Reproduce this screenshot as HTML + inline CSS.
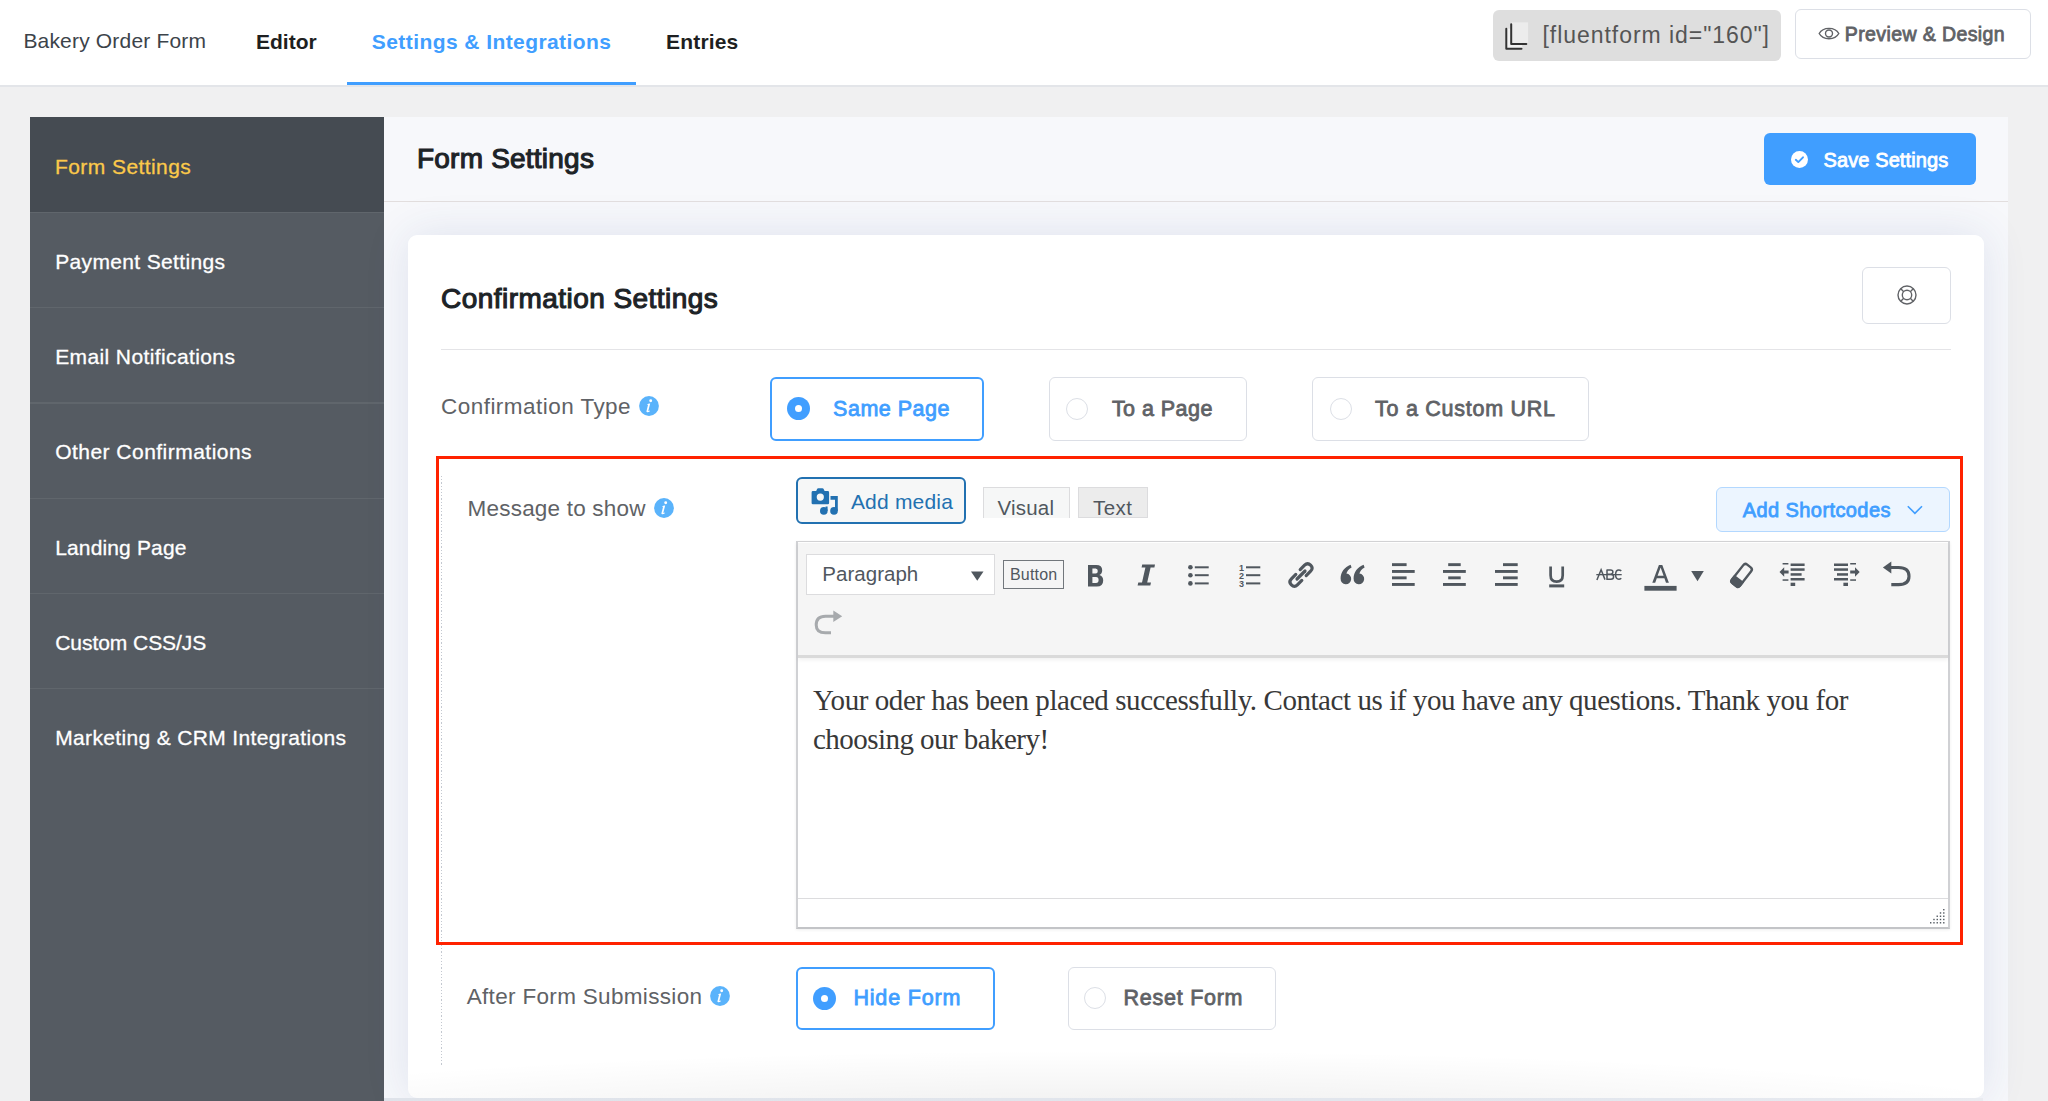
<!DOCTYPE html>
<html><head><meta charset="utf-8"><title>Fluent Forms Settings</title>
<style>
html,body{margin:0;padding:0}
body{width:2048px;height:1101px;overflow:hidden;position:relative;background:#f0f0f1;font-family:"Liberation Sans",sans-serif}
.t{position:absolute;white-space:nowrap}
.box{position:absolute}
.ic{position:absolute;overflow:visible}
#hdr{position:absolute;left:0;top:0;width:2048px;height:85px;background:#fff;border-bottom:2px solid #e3e5e9}
</style></head><body>
<div id="hdr"></div>
<div class="t" style="left:23.40px;top:30.42px;font-size:21px;line-height:21px;font-weight:normal;color:#3c434a;letter-spacing:0.181px;font-family:'Liberation Sans', sans-serif;">Bakery Order Form</div>
<div class="t" style="left:255.90px;top:30.62px;font-size:21px;line-height:21px;font-weight:bold;color:#1e1f21;letter-spacing:0.040px;font-family:'Liberation Sans', sans-serif;">Editor</div>
<div class="t" style="left:371.80px;top:30.62px;font-size:21px;line-height:21px;font-weight:bold;color:#409eff;letter-spacing:0.423px;font-family:'Liberation Sans', sans-serif;">Settings &amp; Integrations</div>
<div class="t" style="left:666.00px;top:30.62px;font-size:21px;line-height:21px;font-weight:bold;color:#1e1f21;letter-spacing:0.183px;font-family:'Liberation Sans', sans-serif;">Entries</div>
<div style="position:absolute;left:347px;top:81.6px;width:288.6px;height:3.4px;background:#409eff"></div>
<div class="box" style="left:1493px;top:10px;width:288px;height:50.6px;background:#dedede;border-radius:6px"></div>
<svg class="ic" style="left:1503px;top:21px" width="28" height="32" viewBox="0 0 28 32">
<rect x="3.6" y="7.6" width="15.5" height="20" fill="#f2f2f2"/>
<rect x="8.6" y="1.3" width="16.5" height="20.6" fill="#ececec"/>
<path d="M8.2 3.3 V23 H23.3" fill="none" stroke="#333" stroke-width="2" stroke-linecap="round" stroke-linejoin="round"/>
<path d="M3.3 7.8 V27.7 H18.5" fill="none" stroke="#333" stroke-width="2" stroke-linecap="round" stroke-linejoin="round"/>
</svg>
<div class="t" style="left:1542.50px;top:23.53px;font-size:23px;line-height:23px;font-weight:normal;color:#555555;letter-spacing:0.950px;font-family:'Liberation Sans', sans-serif;">[fluentform id="160"]</div>
<div class="box" style="left:1794.5px;top:8.5px;width:236.8px;height:50px;border:1.5px solid #dcdfe6;border-radius:6px;box-sizing:border-box;background:#fff"></div>
<svg class="ic" style="left:1818px;top:25px" width="22" height="17" viewBox="0 0 22 17">
<path d="M1.2 8.5 C5 1.6 17 1.6 20.8 8.5 C17 15.4 5 15.4 1.2 8.5Z" fill="none" stroke="#606266" stroke-width="1.4"/>
<circle cx="11" cy="8.5" r="3.5" fill="none" stroke="#606266" stroke-width="1.4"/>
</svg>
<div class="t" style="left:1844.80px;top:24.69px;font-size:19.5px;line-height:19.5px;font-weight:normal;color:#606266;letter-spacing:0.393px;font-family:'Liberation Sans', sans-serif;-webkit-text-stroke:0.8px #606266;">Preview &amp; Design</div>
<div class="box" style="left:30px;top:117px;width:354px;height:984px;background:#555b62"></div>
<div class="box" style="left:30px;top:117px;width:354px;height:95px;background:#454b52"></div>
<div class="box" style="left:30px;top:212.05px;width:354px;height:1.3px;background:#60666c"></div>
<div class="box" style="left:30px;top:307.20px;width:354px;height:1.3px;background:#60666c"></div>
<div class="box" style="left:30px;top:402.35px;width:354px;height:1.3px;background:#60666c"></div>
<div class="box" style="left:30px;top:497.50px;width:354px;height:1.3px;background:#60666c"></div>
<div class="box" style="left:30px;top:592.65px;width:354px;height:1.3px;background:#60666c"></div>
<div class="box" style="left:30px;top:687.80px;width:354px;height:1.3px;background:#60666c"></div>
<div class="t" style="left:55.00px;top:156.22px;font-size:21px;line-height:21px;font-weight:normal;color:#fbc94a;letter-spacing:0.425px;font-family:'Liberation Sans', sans-serif;-webkit-text-stroke:0.3px #fbc94a;">Form Settings</div>
<div class="t" style="left:55.20px;top:251.07px;font-size:21px;line-height:21px;font-weight:normal;color:#ffffff;letter-spacing:0.347px;font-family:'Liberation Sans', sans-serif;-webkit-text-stroke:0.3px #fff;">Payment Settings</div>
<div class="t" style="left:55.20px;top:346.22px;font-size:21px;line-height:21px;font-weight:normal;color:#ffffff;letter-spacing:0.389px;font-family:'Liberation Sans', sans-serif;-webkit-text-stroke:0.3px #fff;">Email Notifications</div>
<div class="t" style="left:55.20px;top:441.37px;font-size:21px;line-height:21px;font-weight:normal;color:#ffffff;letter-spacing:0.472px;font-family:'Liberation Sans', sans-serif;-webkit-text-stroke:0.3px #fff;">Other Confirmations</div>
<div class="t" style="left:55.20px;top:536.52px;font-size:21px;line-height:21px;font-weight:normal;color:#ffffff;letter-spacing:0.145px;font-family:'Liberation Sans', sans-serif;-webkit-text-stroke:0.3px #fff;">Landing Page</div>
<div class="t" style="left:55.20px;top:631.67px;font-size:21px;line-height:21px;font-weight:normal;color:#ffffff;letter-spacing:-0.050px;font-family:'Liberation Sans', sans-serif;-webkit-text-stroke:0.3px #fff;">Custom CSS/JS</div>
<div class="t" style="left:55.20px;top:726.82px;font-size:21px;line-height:21px;font-weight:normal;color:#ffffff;letter-spacing:0.352px;font-family:'Liberation Sans', sans-serif;-webkit-text-stroke:0.3px #fff;">Marketing &amp; CRM Integrations</div>
<div class="box" style="left:384px;top:117px;width:1624px;height:984px;background:#f7f8fb"></div>
<div class="box" style="left:384px;top:201px;width:1624px;height:1.2px;background:#e2dede"></div>
<div class="t" style="left:417.00px;top:144.70px;font-size:28px;line-height:28px;font-weight:normal;color:#1d2327;letter-spacing:0.217px;font-family:'Liberation Sans', sans-serif;-webkit-text-stroke:0.8px #1d2327;-webkit-text-stroke-width:1.1px;">Form Settings</div>
<div class="box" style="left:1764px;top:133px;width:211.6px;height:51.7px;background:#409eff;border-radius:6px"></div>
<svg class="ic" style="left:1791px;top:150.5px" width="17" height="17" viewBox="0 0 17 17">
<circle cx="8.5" cy="8.5" r="8.5" fill="#fff"/>
<path d="M4.8 8.8 L7.3 11.1 L12 6.3" fill="none" stroke="#409eff" stroke-width="1.9" stroke-linecap="round" stroke-linejoin="round"/>
</svg>
<div class="t" style="left:1823.50px;top:149.97px;font-size:20px;line-height:20px;font-weight:normal;color:#ffffff;letter-spacing:0.108px;font-family:'Liberation Sans', sans-serif;-webkit-text-stroke:0.8px #ffffff;">Save Settings</div>
<div class="box" id="card" style="left:408px;top:235px;width:1575.6px;height:862.5px;background:#fff;border-radius:9px;box-shadow:0 0 45px rgba(45,65,140,0.12)"></div>
<div class="box" style="left:408px;top:1030px;width:1575.6px;height:67.5px;border-radius:0 0 9px 9px;background:radial-gradient(ellipse 1000px 75px at 700px 95px, rgba(0,0,0,0.075), rgba(0,0,0,0) 100%)"></div>
<div class="box" style="left:384px;top:1097.8px;width:1599px;height:4px;background:linear-gradient(to right,#dfe3ea,#e3e7ee 80%,#e9ebf0)"></div>
<div class="t" style="left:441.00px;top:284.60px;font-size:28px;line-height:28px;font-weight:normal;color:#1d2327;letter-spacing:0.455px;font-family:'Liberation Sans', sans-serif;-webkit-text-stroke:0.8px #1d2327;-webkit-text-stroke-width:1.1px;">Confirmation Settings</div>
<div class="box" style="left:1862px;top:267.2px;width:89px;height:57.2px;border:1.5px solid #dcdfe6;border-radius:6px;box-sizing:border-box"></div>
<svg class="ic" style="left:1895.5px;top:284px" width="22" height="22" viewBox="0 0 22 22">
<circle cx="11" cy="11" r="9" fill="none" stroke="#606266" stroke-width="1.4"/>
<circle cx="11" cy="11" r="4.7" fill="none" stroke="#606266" stroke-width="1.4"/>
<path d="M4.8 4.8 L7.7 7.7 M17.2 4.8 L14.3 7.7 M4.8 17.2 L7.7 14.3 M17.2 17.2 L14.3 14.3" stroke="#606266" stroke-width="1.4"/>
</svg>
<div class="box" style="left:441px;top:349px;width:1510px;height:1.3px;background:#e4e4e7"></div>
<div class="t" style="left:441.00px;top:395.75px;font-size:22.5px;line-height:22.5px;font-weight:normal;color:#606266;letter-spacing:0.463px;font-family:'Liberation Sans', sans-serif;">Confirmation Type</div>
<svg class="ic" style="left:638.7px;top:396.4px" width="20" height="20" viewBox="0 0 20 20"><circle cx="10" cy="10" r="9.9" fill="#5ab3fb"/><circle cx="11.7" cy="4.8" r="1.45" fill="#fff"/><path d="M8.2 8.3 Q9.6 7.4 11.2 7.6 L9.4 14.4 Q9.2 15.3 10.6 14.6 L10.9 15.2 Q9.4 16.5 8.1 16.3 Q7.2 16.1 7.5 15 L9 9.1 Q8.8 8.7 8.4 8.8Z" fill="#fff"/></svg>
<div class="box" style="left:770.3px;top:377.2px;width:213.8px;height:63.5px;border:2px solid #409eff;border-radius:6px;box-sizing:border-box;background:#fff"></div><div class="box" style="left:787.1px;top:397.4px;width:23px;height:23px;border-radius:50%;background:#409eff"></div><div class="box" style="left:795.0px;top:405.3px;width:7.2px;height:7.2px;border-radius:50%;background:#fff"></div><div class="t" style="left:833.10px;top:398.80px;font-size:21.5px;line-height:21.5px;font-weight:normal;color:#409eff;letter-spacing:0.500px;font-family:'Liberation Sans', sans-serif;-webkit-text-stroke:0.8px #409eff;">Same Page</div>
<div class="box" style="left:1049.3px;top:377.2px;width:197.7px;height:63.5px;border:1.6px solid #dcdfe6;border-radius:6px;box-sizing:border-box;background:#fff"></div><div class="box" style="left:1066.4px;top:397.9px;width:22px;height:22px;border-radius:50%;border:1.7px solid #dcdfe6;box-sizing:border-box;background:#fff"></div><div class="t" style="left:1111.90px;top:398.80px;font-size:21.5px;line-height:21.5px;font-weight:normal;color:#606266;letter-spacing:0.463px;font-family:'Liberation Sans', sans-serif;-webkit-text-stroke:0.8px #606266;">To a Page</div>
<div class="box" style="left:1312.2px;top:377.2px;width:277.2px;height:63.5px;border:1.6px solid #dcdfe6;border-radius:6px;box-sizing:border-box;background:#fff"></div><div class="box" style="left:1329.6px;top:397.9px;width:22px;height:22px;border-radius:50%;border:1.7px solid #dcdfe6;box-sizing:border-box;background:#fff"></div><div class="t" style="left:1375.00px;top:398.80px;font-size:21.5px;line-height:21.5px;font-weight:normal;color:#606266;letter-spacing:0.736px;font-family:'Liberation Sans', sans-serif;-webkit-text-stroke:0.8px #606266;">To a Custom URL</div>
<div class="box" style="left:436.3px;top:456.3px;width:1526.7px;height:488.7px;border:3.7px solid #ff2200;box-sizing:border-box"></div>
<div class="box" style="left:441px;top:476px;width:1.2px;height:466px;background:repeating-linear-gradient(to bottom,#c3c8d0 0,#c3c8d0 1.3px,transparent 1.3px,transparent 3.2px)"></div>
<div class="box" style="left:441px;top:945px;width:1.2px;height:121px;background:repeating-linear-gradient(to bottom,#c3c8d0 0,#c3c8d0 1.3px,transparent 1.3px,transparent 3.2px)"></div>
<div class="t" style="left:467.60px;top:498.15px;font-size:22.5px;line-height:22.5px;font-weight:normal;color:#606266;letter-spacing:0.200px;font-family:'Liberation Sans', sans-serif;">Message to show</div>
<svg class="ic" style="left:654.0px;top:498.0px" width="20" height="20" viewBox="0 0 20 20"><circle cx="10" cy="10" r="9.9" fill="#5ab3fb"/><circle cx="11.7" cy="4.8" r="1.45" fill="#fff"/><path d="M8.2 8.3 Q9.6 7.4 11.2 7.6 L9.4 14.4 Q9.2 15.3 10.6 14.6 L10.9 15.2 Q9.4 16.5 8.1 16.3 Q7.2 16.1 7.5 15 L9 9.1 Q8.8 8.7 8.4 8.8Z" fill="#fff"/></svg>
<div class="box" style="left:796px;top:477px;width:169.5px;height:47.4px;border:2px solid #2271b1;border-radius:6px;box-sizing:border-box;background:#f6f7f7"></div>
<svg class="ic" style="left:800px;top:480px" width="40" height="40" viewBox="0 0 40 40">
<path d="M11.6 12.4 Q11.6 11.1 12.9 11.1 H16.2 L17.2 8.8 Q17.5 8.2 18.3 8.2 H22.4 Q23.2 8.2 23.5 8.8 L24.6 11.1 H27.8 Q29.1 11.1 29.1 12.4 V22.9 Q29.1 24.2 27.8 24.2 H12.9 Q11.6 24.2 11.6 22.9 Z" fill="#2271b1"/>
<circle cx="20.3" cy="17.1" r="3.6" fill="#f6f7f7"/>
<circle cx="23.8" cy="30.9" r="3.8" fill="#2271b1"/>
<path d="M25.6 26.5 H27.6 V31 H25.6Z" fill="#2271b1"/>
<path d="M30.5 16 H37.8 V31 H35 V19.8 H30.5Z" fill="#2271b1"/>
<circle cx="34" cy="30.9" r="3.8" fill="#2271b1"/>
</svg>
<div class="t" style="left:850.90px;top:491.22px;font-size:21px;line-height:21px;font-weight:normal;color:#2271b1;letter-spacing:0.200px;font-family:'Liberation Sans', sans-serif;">Add media</div>
<div class="box" style="left:982.5px;top:486.5px;width:87px;height:31.5px;border:1.5px solid #dcdcde;border-bottom:none;box-sizing:border-box;background:#f6f7f7"></div>
<div class="t" style="left:997.40px;top:497.65px;font-size:20.5px;line-height:20.5px;font-weight:normal;color:#50575e;letter-spacing:0.220px;font-family:'Liberation Sans', sans-serif;">Visual</div>
<div class="box" style="left:1078px;top:486.5px;width:69.7px;height:31.5px;border:1.5px solid #dcdcde;box-sizing:border-box;background:#ececec"></div>
<div class="t" style="left:1093.00px;top:497.65px;font-size:20.5px;line-height:20.5px;font-weight:normal;color:#50575e;letter-spacing:0.467px;font-family:'Liberation Sans', sans-serif;">Text</div>
<div class="box" style="left:1716.2px;top:487.1px;width:233.4px;height:44.6px;border:1.5px solid #b3d8ff;border-radius:6px;box-sizing:border-box;background:#ecf5ff"></div>
<div class="t" style="left:1742.80px;top:500.07px;font-size:20px;line-height:20px;font-weight:normal;color:#409eff;letter-spacing:0.408px;font-family:'Liberation Sans', sans-serif;-webkit-text-stroke:0.8px #409eff;">Add Shortcodes</div>
<svg class="ic" style="left:1906px;top:504px" width="18" height="12" viewBox="0 0 18 12">
<path d="M1.8 2.2 L8.9 9.3 L16 2.2" fill="none" stroke="#409eff" stroke-width="1.6"/>
</svg>
<div class="box" style="left:796px;top:541px;width:1154px;height:387.8px;border:2px solid #d0d1d4;border-top:1.5px solid #d2d2d4;border-bottom-color:#c3c4c7;box-sizing:border-box;background:#fff;box-shadow:0 1px 3px rgba(0,0,0,0.07)"></div>
<div class="box" style="left:798px;top:542.5px;width:1150px;height:112.5px;background:#f5f5f5;border-bottom:3px solid #dadada;box-shadow:0 2px 4px rgba(0,0,0,0.06)"></div>
<div class="box" style="left:798px;top:897.8px;width:1150px;height:1.6px;background:#dcdcde"></div>
<div class="box" style="left:806px;top:554.4px;width:188.6px;height:40.4px;border:1.5px solid #dcdcde;box-sizing:border-box;background:#fff"></div>
<div class="t" style="left:822.30px;top:564.35px;font-size:20.5px;line-height:20.5px;font-weight:normal;color:#50575e;letter-spacing:0.025px;font-family:'Liberation Sans', sans-serif;">Paragraph</div>
<svg class="ic" style="left:970px;top:571px" width="14" height="10" viewBox="0 0 14 10"><path d="M1 0.6 H13.5 L7.25 9.8Z" fill="#50575e"/></svg>
<div class="box" style="left:1003px;top:560px;width:61px;height:28.5px;border:1.8px solid #72777c;box-sizing:border-box"></div>
<div class="t" style="left:1010.00px;top:566.76px;font-size:16px;line-height:16px;font-weight:normal;color:#50575e;letter-spacing:0.200px;font-family:'Liberation Sans', sans-serif;">Button</div>
<svg class="ic" style="left:1088px;top:564.6px" width="16" height="22" viewBox="0 0 16 22">
<path fill-rule="evenodd" d="M0 0 H8.2 Q14.2 0 14.2 5.3 Q14.2 8.7 11.4 10 Q15.2 11.2 15.2 15.4 Q15.2 21.4 8.8 21.4 H0 Z M4.4 3.5 V8.6 H7.6 Q9.8 8.6 9.8 6 Q9.8 3.5 7.6 3.5 Z M4.4 12 V17.9 H8 Q10.6 17.9 10.6 14.9 Q10.6 12 8 12 Z" fill="#50575e"/></svg>
<svg class="ic" style="left:1136px;top:563px" width="20" height="24" viewBox="0 0 20 24">
<path d="M6.2 1.6 H19 L18.4 4.6 H14.6 L11.2 19.4 H15 L14.3 22.4 H1.6 L2.3 19.4 H6 L9.4 4.6 H5.6Z" fill="#50575e"/></svg>
<svg class="ic" style="left:1186px;top:563px" width="24" height="24" viewBox="0 0 24 24">
<circle cx="4.4" cy="4.3" r="2.3" fill="#50575e"/><circle cx="4.4" cy="12.2" r="2.3" fill="#50575e"/><circle cx="4.4" cy="20.4" r="2.3" fill="#50575e"/>
<rect x="8.8" y="3.3" width="13.9" height="2" fill="#50575e"/><rect x="8.8" y="11.2" width="13.9" height="2" fill="#50575e"/><rect x="8.8" y="19.4" width="13.9" height="2" fill="#50575e"/></svg>
<svg class="ic" style="left:1236px;top:561px" width="26" height="28" viewBox="0 0 26 28">
<text x="5.5" y="9.5" font-family="Liberation Sans" font-weight="bold" font-size="9" fill="#50575e" text-anchor="middle">1</text>
<text x="5.5" y="17.6" font-family="Liberation Sans" font-weight="bold" font-size="9" fill="#50575e" text-anchor="middle">2</text>
<text x="5.5" y="25.8" font-family="Liberation Sans" font-weight="bold" font-size="9" fill="#50575e" text-anchor="middle">3</text>
<rect x="10" y="5.3" width="14.3" height="2" fill="#50575e"/><rect x="10" y="13.2" width="14.3" height="2" fill="#50575e"/><rect x="10" y="21.4" width="14.3" height="2" fill="#50575e"/></svg>
<svg class="ic" style="left:1286px;top:560px" width="30" height="30" viewBox="0 0 30 30">
<g fill="none" stroke="#50575e" stroke-width="3.2" stroke-linecap="round">
<path d="M14.2 9.6 L18.6 5.2 Q21.6 2.2 24.6 5.2 Q27.6 8.2 24.6 11.2 L20.2 15.6"/>
<path d="M15.8 20.4 L11.4 24.8 Q8.4 27.8 5.4 24.8 Q2.4 21.8 5.4 18.8 L9.8 14.4"/>
<path d="M11 19 L19 11"/></g></svg>
<svg class="ic" style="left:1339.5px;top:564px" width="26" height="22" viewBox="0 0 26 22">
<path d="M10.6 0.8 C4.6 3.2 0.6 8 0.6 14.6 A5.3 5.3 0 1 0 6.4 9.6 C7 7 8.6 5.2 11.6 3.4 Z" fill="#50575e"/>
<path d="M23.6 0.8 C17.6 3.2 13.6 8 13.6 14.6 A5.3 5.3 0 1 0 19.4 9.6 C20 7 21.6 5.2 24.6 3.4 Z" fill="#50575e"/></svg>
<svg class="ic" style="left:1392px;top:560px" width="26" height="30" viewBox="0 0 26 30"><rect x="0" y="3.2" width="14.6" height="2.9" fill="#50575e"/><rect x="0" y="10" width="22.7" height="2.9" fill="#50575e"/><rect x="0" y="16.4" width="14.6" height="2.9" fill="#50575e"/><rect x="0" y="23" width="22.7" height="2.9" fill="#50575e"/></svg>
<svg class="ic" style="left:1443.3px;top:560px" width="26" height="30" viewBox="0 0 26 30"><rect x="5.2" y="3.2" width="12.5" height="2.9" fill="#50575e"/><rect x="0" y="10" width="22.8" height="2.9" fill="#50575e"/><rect x="5.2" y="16.4" width="12.5" height="2.9" fill="#50575e"/><rect x="0" y="23" width="22.8" height="2.9" fill="#50575e"/></svg>
<svg class="ic" style="left:1495px;top:560px" width="26" height="30" viewBox="0 0 26 30"><rect x="8" y="3.2" width="14.7" height="2.9" fill="#50575e"/><rect x="0" y="10" width="22.7" height="2.9" fill="#50575e"/><rect x="8" y="16.4" width="14.7" height="2.9" fill="#50575e"/><rect x="0" y="23" width="22.7" height="2.9" fill="#50575e"/></svg>
<svg class="ic" style="left:1546px;top:562px" width="22" height="28" viewBox="0 0 22 28">
<path d="M4.6 4.4 V13.2 Q4.6 19.7 10.65 19.7 Q16.7 19.7 16.7 13.2 V4.4" fill="none" stroke="#50575e" stroke-width="2.7"/>
<rect x="3.2" y="22.4" width="15" height="3" fill="#50575e"/></svg>
<svg class="ic" style="left:1596px;top:569px" width="27" height="12" viewBox="0 0 27 12">
<g fill="none" stroke="#50575e" stroke-width="1.5">
<path d="M0.9 11 L5.1 0.8 L9 10.6"/>
<path d="M11 1 H14.6 Q16.9 1 16.9 3 Q16.9 5 14.6 5.2 H11 M11 5.2 H15 Q17.6 5.2 17.6 7.7 Q17.6 10.2 15 10.2 H11 V0.4"/>
<path d="M25.3 1.9 Q24.2 0.9 22.8 0.9 Q19.6 0.9 19.6 5.5 Q19.6 10.2 22.8 10.2 Q24.2 10.2 25.3 9.2"/>
</g>
<rect x="0.3" y="5" width="25.4" height="1.3" fill="#50575e"/></svg>
<svg class="ic" style="left:1643px;top:562px" width="36" height="32" viewBox="0 0 36 32">
<path fill-rule="evenodd" d="M15.9 3 H19.3 L25.9 20.8 H23 L21.4 16.2 H13.8 L12.2 20.8 H9.3 Z M14.6 13.8 H20.6 L17.6 5.4 Z" fill="#50575e"/>
<rect x="1.4" y="23.9" width="32.2" height="4.8" fill="#50575e"/></svg>
<svg class="ic" style="left:1690px;top:570px" width="15" height="12" viewBox="0 0 15 12"><path d="M1.2 1 H13.8 L7.5 11.2Z" fill="#50575e"/></svg>
<svg class="ic" style="left:1729px;top:561px" width="26" height="29" viewBox="0 0 26 29">
<g transform="rotate(-52 12.7 14.3)">
<rect x="0.9" y="9.3" width="23.6" height="10" rx="2.8" fill="none" stroke="#50575e" stroke-width="2.4"/>
<path d="M2.9 8.1 H8.6 V20.5 H2.9 Q-0.3 20.5 -0.3 17.3 V11.3 Q-0.3 8.1 2.9 8.1Z" fill="#50575e"/>
</g></svg>
<svg class="ic" style="left:1779px;top:562px" width="27" height="26" viewBox="0 0 27 26">
<rect x="11.6" y="1.5" width="14" height="2.5" fill="#50575e"/>
<rect x="11.6" y="6.3" width="14" height="2.5" fill="#50575e"/>
<rect x="11.6" y="11.2" width="11" height="2.5" fill="#50575e"/>
<rect x="11.6" y="16" width="14" height="2.5" fill="#50575e"/>
<rect x="3.6" y="1" width="5.8" height="1.5" fill="#50575e"/>
<rect x="3.6" y="17.3" width="5.8" height="1.5" fill="#50575e"/>
<rect x="11.6" y="20.7" width="4.6" height="3.3" fill="#50575e"/>
<path d="M0.5 10 L5.2 5.2 V8.4 H9.6 V11.6 H5.2 V14.8Z" fill="#50575e"/></svg>
<svg class="ic" style="left:1834px;top:562px" width="27" height="26" viewBox="0 0 27 26">
<rect x="0" y="1.5" width="14" height="2.5" fill="#50575e"/>
<rect x="0" y="6.3" width="14" height="2.5" fill="#50575e"/>
<rect x="3" y="11.2" width="11" height="2.5" fill="#50575e"/>
<rect x="0" y="16" width="14" height="2.5" fill="#50575e"/>
<rect x="16.2" y="1" width="5.8" height="1.5" fill="#50575e"/>
<rect x="16.2" y="17.3" width="5.8" height="1.5" fill="#50575e"/>
<rect x="9.4" y="20.7" width="4.6" height="3.3" fill="#50575e"/>
<path d="M25.7 10 L21 5.2 V8.4 H16.2 V11.6 H21 V14.8Z" fill="#50575e"/></svg>
<svg class="ic" style="left:1882px;top:561px" width="29" height="26" viewBox="0 0 29 26">
<path d="M0.9 6.5 L9.3 0.6 V12.4Z" fill="#50575e"/>
<path d="M8 6.5 H16.5 Q27 6.5 27 15.2 Q27 23.6 16.5 23.6 H9.3" fill="none" stroke="#50575e" stroke-width="3.1"/></svg>
<svg class="ic" style="left:814px;top:610px" width="30" height="25" viewBox="0 0 30 25">
<path d="M28.2 6.2 L19.3 0.6 V12Z" fill="#a7aaad"/>
<path d="M20.5 6.2 H11.5 Q2.2 6.2 2.2 15 Q2.2 22.8 11.5 22.8 H17" fill="none" stroke="#a7aaad" stroke-width="3"/></svg>
<div class="t" style="left:813.00px;top:686.31px;font-size:29px;line-height:29px;font-weight:normal;color:#383838;letter-spacing:-0.436px;font-family:'Liberation Serif', serif;">Your oder has been placed successfully. Contact us if you have any questions. Thank you for</div>
<div class="t" style="left:813.00px;top:724.81px;font-size:29px;line-height:29px;font-weight:normal;color:#383838;letter-spacing:-0.547px;font-family:'Liberation Serif', serif;">choosing our bakery!</div>
<svg class="ic" style="left:1929.3px;top:908.2px" width="15" height="15" viewBox="0 0 15 15"><rect x="14.08" y="1.00" width="1.4" height="1.4" fill="#50575e"/><rect x="10.81" y="4.27" width="1.4" height="1.4" fill="#50575e"/><rect x="14.08" y="4.27" width="1.4" height="1.4" fill="#50575e"/><rect x="7.54" y="7.54" width="1.4" height="1.4" fill="#50575e"/><rect x="10.81" y="7.54" width="1.4" height="1.4" fill="#50575e"/><rect x="14.08" y="7.54" width="1.4" height="1.4" fill="#50575e"/><rect x="4.27" y="10.81" width="1.4" height="1.4" fill="#50575e"/><rect x="7.54" y="10.81" width="1.4" height="1.4" fill="#50575e"/><rect x="10.81" y="10.81" width="1.4" height="1.4" fill="#50575e"/><rect x="14.08" y="10.81" width="1.4" height="1.4" fill="#50575e"/><rect x="1.00" y="14.08" width="1.4" height="1.4" fill="#50575e"/><rect x="4.27" y="14.08" width="1.4" height="1.4" fill="#50575e"/><rect x="7.54" y="14.08" width="1.4" height="1.4" fill="#50575e"/><rect x="10.81" y="14.08" width="1.4" height="1.4" fill="#50575e"/><rect x="14.08" y="14.08" width="1.4" height="1.4" fill="#50575e"/></svg>
<div class="t" style="left:466.70px;top:986.25px;font-size:22.5px;line-height:22.5px;font-weight:normal;color:#606266;letter-spacing:0.325px;font-family:'Liberation Sans', sans-serif;">After Form Submission</div>
<svg class="ic" style="left:709.7px;top:986.2px" width="20" height="20" viewBox="0 0 20 20"><circle cx="10" cy="10" r="9.9" fill="#5ab3fb"/><circle cx="11.7" cy="4.8" r="1.45" fill="#fff"/><path d="M8.2 8.3 Q9.6 7.4 11.2 7.6 L9.4 14.4 Q9.2 15.3 10.6 14.6 L10.9 15.2 Q9.4 16.5 8.1 16.3 Q7.2 16.1 7.5 15 L9 9.1 Q8.8 8.7 8.4 8.8Z" fill="#fff"/></svg>
<div class="box" style="left:796px;top:966.5px;width:199.3px;height:63.7px;border:2px solid #409eff;border-radius:6px;box-sizing:border-box;background:#fff"></div><div class="box" style="left:812.9px;top:986.9px;width:23px;height:23px;border-radius:50%;background:#409eff"></div><div class="box" style="left:820.8px;top:994.8px;width:7.2px;height:7.2px;border-radius:50%;background:#fff"></div><div class="t" style="left:853.40px;top:988.20px;font-size:21.5px;line-height:21.5px;font-weight:normal;color:#409eff;letter-spacing:0.837px;font-family:'Liberation Sans', sans-serif;-webkit-text-stroke:0.8px #409eff;">Hide Form</div>
<div class="box" style="left:1067.5px;top:966.5px;width:208.9px;height:63.7px;border:1.6px solid #dcdfe6;border-radius:6px;box-sizing:border-box;background:#fff"></div><div class="box" style="left:1084.4px;top:987.4px;width:22px;height:22px;border-radius:50%;border:1.7px solid #dcdfe6;box-sizing:border-box;background:#fff"></div><div class="t" style="left:1123.60px;top:988.20px;font-size:21.5px;line-height:21.5px;font-weight:normal;color:#606266;letter-spacing:0.733px;font-family:'Liberation Sans', sans-serif;-webkit-text-stroke:0.8px #606266;">Reset Form</div>
</body></html>
